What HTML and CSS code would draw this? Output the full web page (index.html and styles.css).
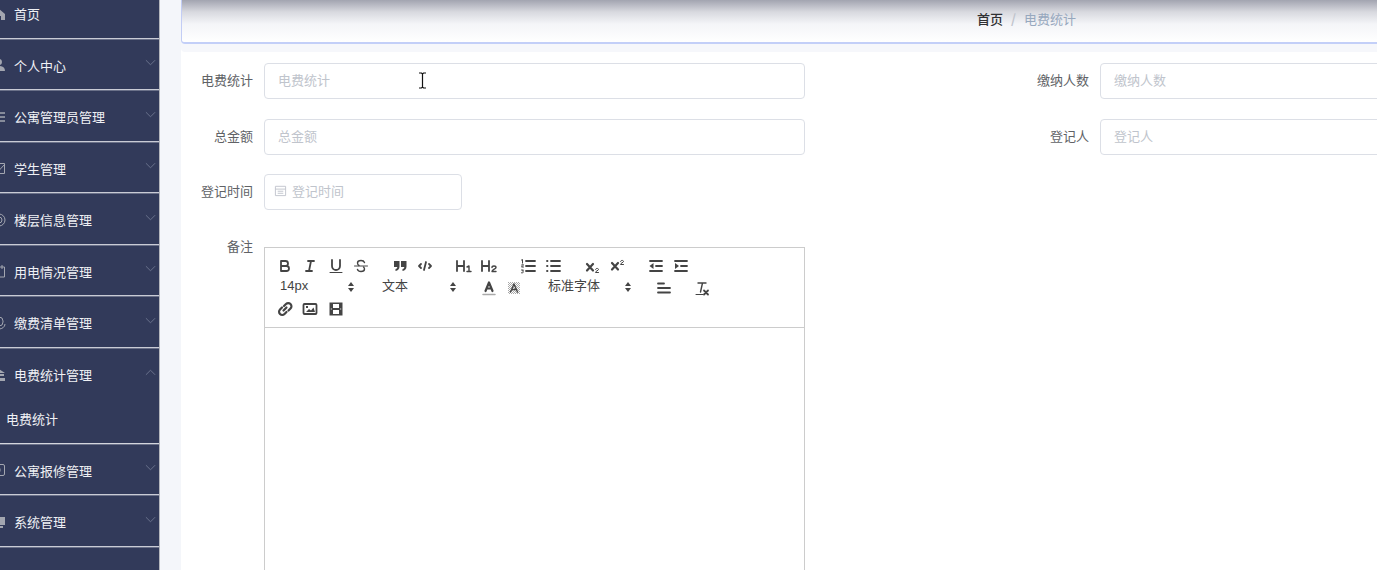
FILE: index.html
```html
<!DOCTYPE html>
<html lang="zh-CN">
<head>
  <meta charset="UTF-8" />
  <title>电费统计</title>
  <link rel="stylesheet" href="styles.css">
</head>
<body>
  <aside class="sidebar">
    <ul class="menu">
      <li class="menu-item">
        <svg class="menu-icon" viewBox="0 0 14 14"><path d="M7 2 1 7v6h4V9h4v4h4V7z" fill="currentColor"/></svg>
        <span>首页</span>
      </li>
      <li class="menu-item">
        <svg class="menu-icon" viewBox="0 0 14 14"><circle cx="7" cy="4" r="3" fill="currentColor"/><path d="M1 13c0-3 2-5 6-5s6 2 6 5z" fill="currentColor"/></svg>
        <span>个人中心</span>
        <svg class="chevron" viewBox="0 0 12 7"><path d="M1 1l5 5 5-5"/></svg>
      </li>
      <li class="menu-item">
        <svg class="menu-icon" viewBox="0 0 14 14"><path d="M1 3h12M1 7h12M1 11h12" stroke="currentColor" stroke-width="1.4" fill="none"/></svg>
        <span>公寓管理员管理</span>
        <svg class="chevron" viewBox="0 0 12 7"><path d="M1 1l5 5 5-5"/></svg>
      </li>
      <li class="menu-item">
        <svg class="menu-icon" viewBox="0 0 14 14"><path d="M1.500 2.500h11v10h-11zM4 8l2.500 2L13 3" stroke="currentColor" fill="none"/></svg>
        <span>学生管理</span>
        <svg class="chevron" viewBox="0 0 12 7"><path d="M1 1l5 5 5-5"/></svg>
      </li>
      <li class="menu-item">
        <svg class="menu-icon" viewBox="0 0 14 14"><circle cx="7" cy="7" r="6" stroke="currentColor" fill="none"/><circle cx="7" cy="7" r="3" stroke="currentColor" fill="none"/></svg>
        <span>楼层信息管理</span>
        <svg class="chevron" viewBox="0 0 12 7"><path d="M1 1l5 5 5-5"/></svg>
      </li>
      <li class="menu-item">
        <svg class="menu-icon" viewBox="0 0 14 14"><path d="M1.500 3h11v10h-11zM10 1v4" stroke="currentColor" fill="none"/></svg>
        <span>用电情况管理</span>
        <svg class="chevron" viewBox="0 0 12 7"><path d="M1 1l5 5 5-5"/></svg>
      </li>
      <li class="menu-item">
        <svg class="menu-icon" viewBox="0 0 14 14"><rect x="3" y="1" width="8" height="9" rx="4" stroke="currentColor" fill="none"/><path d="M1 8c0 3 3 5 6 5s6-2 6-5" stroke="currentColor" fill="none"/></svg>
        <span>缴费清单管理</span>
        <svg class="chevron" viewBox="0 0 12 7"><path d="M1 1l5 5 5-5"/></svg>
      </li>
      <li class="menu-item open">
        <svg class="menu-icon" viewBox="0 0 14 14"><path d="M7 1 1 5h12zM2 6h10v2H2zM1 10h12v3H1z" fill="currentColor"/></svg>
        <span>电费统计管理</span>
        <svg class="chevron" viewBox="0 0 12 7"><path d="M1 6l5-5 5 5"/></svg>
      </li>
      <li class="menu-sub">电费统计</li>
      <li class="menu-item">
        <svg class="menu-icon" viewBox="0 0 14 14"><rect x="1.500" y="1.500" width="11" height="11" rx="1.500" stroke="currentColor" fill="none"/><rect x="5.500" y="5.500" width="3" height="3" fill="currentColor"/></svg>
        <span>公寓报修管理</span>
        <svg class="chevron" viewBox="0 0 12 7"><path d="M1 1l5 5 5-5"/></svg>
      </li>
      <li class="menu-item">
        <svg class="menu-icon" viewBox="0 0 14 14"><path d="M1 2h12v8H1zM3 11h8v2H3z" fill="currentColor"/></svg>
        <span>系统管理</span>
        <svg class="chevron" viewBox="0 0 12 7"><path d="M1 1l5 5 5-5"/></svg>
      </li>
    </ul>
  </aside>

  <main class="main">
    <header class="topbar">
      <span class="crumb-home">首页</span>
      <span class="crumb-sep">/</span>
      <span class="crumb-now">电费统计</span>
    </header>

    <form class="form">
      <div class="form-row">
        <div class="field">
          <label class="field-label">电费统计</label>
          <input class="field-input" placeholder="电费统计" />
        </div>
        <div class="field">
          <label class="field-label">缴纳人数</label>
          <input class="field-input" placeholder="缴纳人数" />
        </div>
      </div>
      <div class="form-row">
        <div class="field">
          <label class="field-label">总金额</label>
          <input class="field-input" placeholder="总金额" />
        </div>
        <div class="field">
          <label class="field-label">登记人</label>
          <input class="field-input" placeholder="登记人" />
        </div>
      </div>
      <div class="form-row">
        <div class="field">
          <label class="field-label">登记时间</label>
          <div class="date-input">
            <svg class="date-icon" viewBox="0 0 14 14"><path d="M1.500 2.500h11v10h-11zM1.500 5.500h11M4 7.800h6M4 10h6" stroke="currentColor" fill="none"/></svg>
            <input placeholder="登记时间" />
          </div>
        </div>
      </div>
      <div class="form-row editor-row">
        <label class="field-label">备注</label>
        <div class="editor">
          <div class="toolbar">
            <div class="tb-row">
              <div class="tb-group">
                <span class="tb-btn"><svg viewBox="0 0 18 18"><path d="M5 4h4.500a2.500 2.500 0 0 1 0 5H5zM5 9h5.500a2.500 2.500 0 0 1 0 5H5z"/></svg></span>
                <span class="tb-btn"><svg viewBox="0 0 18 18"><path d="M7 4h6M5 14h6M8 14l2-10"/></svg></span>
                <span class="tb-btn"><svg viewBox="0 0 18 18"><path d="M5 3v6a4 4 0 0 0 8 0V3"/><path d="M3 15.500h12" class="thin"/></svg></span>
                <span class="tb-btn"><svg viewBox="0 0 18 18"><path class="thin" d="M2.500 9h13"/><path class="thin-b" d="M12.500 5.500C12 4 10.500 3.500 9 3.500c-2 0-3.500 1-3.500 2.500 0 1 .5 2 1.500 2.500M5.500 12.500c.5 1.500 2 2 3.500 2 2 0 3.500-1 3.500-2.500 0-1-.5-1.500-1-2"/></svg></span>
              </div>
              <div class="tb-group">
                <span class="tb-btn"><svg viewBox="0 0 18 18"><path class="solid" d="M3 4h5.500v5.500c0 2.500-1.500 4-4 4.500v-2c1 0 1.800-.8 1.800-2H3zM10 4h5.500v5.500c0 2.500-1.500 4-4 4.500v-2c1 0 1.800-.8 1.800-2H10z"/></svg></span>
                <span class="tb-btn"><svg viewBox="0 0 18 18"><path d="M5 7 3 9l2 2M13 7l2 2-2 2M10 5 8 13"/></svg></span>
              </div>
              <div class="tb-group">
                <span class="tb-btn"><svg viewBox="0 0 18 18"><path d="M2 4v10M9 4v10M2 9h7"/><path class="thin-b" d="M12 10l2-1v5.500M12 14.500h4"/></svg></span>
                <span class="tb-btn"><svg viewBox="0 0 18 18"><path d="M2 4v10M9 4v10M2 9h7"/><path class="thin-b" d="M12 10.500c0-2 4-2 4 0 0 1.500-4 2-4 4h4"/></svg></span>
              </div>
              <div class="tb-group">
                <span class="tb-btn"><svg viewBox="0 0 18 18"><path d="M7 4h9M7 9h9M7 14h9"/><path class="thin" d="M2.500 3l1-.5v3.500M2.500 8c0-1 2-1 2 0 0 .8-2 1-2 2h2M2.500 13h2l-1 1c1 0 1.200 1.800 0 1.800h-1"/></svg></span>
                <span class="tb-btn"><svg viewBox="0 0 18 18"><path d="M7 4h9M7 9h9M7 14h9M3 4h.5M3 9h.5M3 14h.5"/></svg></span>
              </div>
              <div class="tb-group">
                <span class="tb-btn"><svg viewBox="0 0 18 18"><path class="thick" d="M4 7l6 6.500M10 7l-6 6.500"/><path class="thin" d="M12.500 12.500c0-1.500 3-1.500 3 0 0 1-3 1.500-3 3h3"/></svg></span>
                <span class="tb-btn"><svg viewBox="0 0 18 18"><path class="thick" d="M4 6l6 6.500M10 6l-6 6.500"/><path class="thin" d="M12.500 4.500c0-1.500 3-1.500 3 0 0 1-3 1.500-3 3h3"/></svg></span>
              </div>
              <div class="tb-group">
                <span class="tb-btn"><svg viewBox="0 0 18 18"><path d="M3 4h12M9 9h6M3 14h12"/><path class="solid" d="M6.500 6v6L2.500 9z"/></svg></span>
                <span class="tb-btn"><svg viewBox="0 0 18 18"><path d="M3 4h12M9 9h6M3 14h12"/><path class="solid" d="M3 6v6L7 9z"/></svg></span>
              </div>
            </div>
            <div class="tb-row">
              <div class="tb-group">
                <span class="tb-picker">14px<svg class="updown" viewBox="0 0 8 12"><path d="M4 1 7 5H1zM4 11 1 7h6z"/></svg></span>
              </div>
              <div class="tb-group">
                <span class="tb-picker">文本<svg class="updown" viewBox="0 0 8 12"><path d="M4 1 7 5H1zM4 11 1 7h6z"/></svg></span>
              </div>
              <div class="tb-group">
                <span class="tb-btn"><svg viewBox="0 0 18 18"><path class="thick" d="M5.500 12 9 3.500l3.500 8.500M6.500 9.500h5"/><path class="gray" d="M3 15.500h12"/></svg></span>
                <span class="tb-btn"><svg viewBox="0 0 18 18"><defs><pattern id="hatch" width="2" height="2" patternUnits="userSpaceOnUse"><rect class="blank-stroke" width="1" height="1" fill="#aaa"/><rect class="blank-stroke" x="1" y="1" width="1" height="1" fill="#aaa"/></pattern></defs><rect class="hatch" x="3" y="3" width="12" height="12" fill="url(#hatch)"/><path class="thin-b" d="M5.500 13 9 5l3.500 8M7 10.500h4"/></svg></span>
              </div>
              <div class="tb-group">
                <span class="tb-picker wide">标准字体<svg class="updown" viewBox="0 0 8 12"><path d="M4 1 7 5H1zM4 11 1 7h6z"/></svg></span>
              </div>
              <div class="tb-group">
                <span class="tb-btn"><svg viewBox="0 0 18 18"><path d="M3 4.500h6M3 9h12M3 13.500h12"/></svg></span>
              </div>
              <div class="tb-group">
                <span class="tb-btn"><svg viewBox="0 0 18 18"><path class="thin-b" d="M5 4h8M9.500 4 7.500 13"/><path class="thin" d="M3 15.500h7"/><path d="M11 11.500l4 4M15 11.500l-4 4"/></svg></span>
              </div>
            </div>
            <div class="tb-row">
              <div class="tb-group">
                <span class="tb-btn"><svg viewBox="0 0 18 18"><path class="thick" d="M7.500 10.500l3-3M6 7.500 4 9.500a3 3 0 0 0 4.500 4.500L10.500 12M8 6 10 4a3 3 0 0 1 4.500 4.500L12.500 10.500"/></svg></span>
                <span class="tb-btn"><svg viewBox="0 0 18 18"><rect x="2.500" y="4" width="13" height="10" rx="1"/><path class="solid" d="M5 12l3-3 2 1.500 2.500-3L14 12z"/><path class="solid" d="M5 6h2v2H5z"/></svg></span>
                <span class="tb-btn"><svg viewBox="0 0 18 18"><path class="solid" d="M2.500 2.500h13v13h-13z"/><path class="blank" d="M6 4h6v4H6zM6 10h6v4H6zM3.800 8.500h1v1h-1zM13.200 8.500h1v1h-1z"/></svg></span>
              </div>
            </div>
          </div>
          <div class="editor-body"></div>
        </div>
      </div>
    </form>
  </main>

  <!-- mouse pointer -->
  <svg class="text-cursor" viewBox="0 0 9 17"><path d="M1 1h2.500L4.500 2l1-1H8M4.500 2v13M1 16h2.500l1-1 1 1H8" fill="none" stroke="#111" stroke-width="1.200"/></svg>
</body>
</html>
```

FILE: styles.css
```css
html, body {
  height: 100%;
}

body {
  margin: 0;
  display: flex;
  height: 570px;
  overflow: hidden;
  background-color: #f4f6fa;
  font-family: "Noto Sans CJK SC", "Liberation Sans", sans-serif;
  font-size: 13px;
  color: #606266;
}

/* sidebar */
.sidebar {
  width: 160px;
  flex: none;
  box-sizing: border-box;
  background-color: #323a5a;
  border-right: 1px solid #b4b6bd;
  overflow: hidden;
}

.menu {
  list-style: none;
  margin: -13px 0 0;
  padding: 0;
}

.menu-item {
  display: flex;
  align-items: center;
  height: 51.5px;
  box-sizing: border-box;
  padding-top: 3px;
  border-bottom: 1px solid #c9cbd5;
  box-shadow: 0 1px 0 #6b7189;
  color: #f0f1f5;
}

.menu-item.open {
  border-bottom: none;
  box-shadow: none;
}

.menu-icon {
  width: 14px;
  height: 14px;
  margin-left: -8px;
  margin-right: 8px;
  flex: none;
  color: #a3a6b0;
}

.chevron {
  width: 11px;
  height: 7px;
  margin-left: auto;
  margin-right: 3px;
  margin-top: -5px;
  fill: none;
  stroke: #6f7690;
  stroke-width: 1;
}

.menu-sub {
  height: 44.500px;
  box-sizing: border-box;
  padding: 10px 0 0 6px;
  line-height: 20px;
  border-bottom: 1px solid #d3d5dd;
  box-shadow: 0 1px 0 #6b7189;
  color: #f0f1f5;
}

/* main column */
.main {
  flex: none;
  width: 1196px;
  margin-left: 21px;
  background-color: #fff;
}

.topbar {
  display: flex;
  align-items: center;
  justify-content: flex-end;
  height: 44px;
  box-sizing: border-box;
  padding: 0 301px 5px 0;
  background: linear-gradient(#a2a4b0, #d8d9df 12px, #f4f5f8 24px, #fff);
  border-left: 1px solid #c3cdf5;
  border-bottom: 2px solid #c3cff8;
  border-bottom-left-radius: 4px;
  box-shadow: 0 8px 0 #f6f7fb;
}

.crumb-home {
  color: #303133;
  font-weight: 500;
}

.crumb-sep {
  margin: 0 8px;
  color: #c0c4cc;
  font-weight: 700;
}

.crumb-now {
  color: #97a8be;
}

/* form */
.form {
  padding-top: 19px;
}

.form-row {
  display: grid;
  grid-template-columns: 836px 836px;
  margin-bottom: 19.5px;
}

.field {
  display: flex;
  align-items: center;
}

.field-label {
  width: 72px;
  height: 36px;
  margin-right: 11px;
  flex: none;
  text-align: right;
  line-height: 34px;
}

.field-input {
  width: 541px;
  height: 36px;
  box-sizing: border-box;
  padding: 0 13px 3px;
  border: 1px solid #dcdfe6;
  border-radius: 4px;
  font: inherit;
  color: #606266;
  outline: none;
}

input::placeholder {
  color: #c0c4cc;
  opacity: 1;
}

.date-input {
  display: flex;
  align-items: center;
  width: 198px;
  height: 36px;
  box-sizing: border-box;
  padding: 0 0 3px 9px;
  border: 1px solid #dcdfe6;
  border-radius: 4px;
}

.date-icon {
  width: 13px;
  height: 13px;
  margin-right: 5px;
  flex: none;
  color: #c0c4cc;
}

.date-input input {
  flex: 1;
  min-width: 0;
  padding: 0;
  border: none;
  font: inherit;
  outline: none;
}

/* rich text editor */
.editor-row {
  display: flex;
  align-items: flex-start;
  margin-bottom: 0;
}

.editor-row .field-label {
  line-height: 32px;
}

.editor {
  width: 541px;
  margin-top: 17px;
  box-sizing: border-box;
  border: 1px solid #ccc;
}

.toolbar {
  height: 80px;
  box-sizing: border-box;
  padding: 8px 0 0 7px;
  border-bottom: 1px solid #ccc;
  font-family: "Liberation Sans", "Noto Sans CJK SC", sans-serif;
  color: #444;
}

.tb-row {
  display: flex;
  height: 21.5px;
}

.tb-group {
  display: flex;
  margin-right: 13px;
}

.tb-btn {
  display: flex;
  align-items: center;
  justify-content: center;
  width: 25.500px;
  height: 21.500px;
}

.tb-btn svg {
  width: 18px;
  height: 18px;
  fill: none;
  stroke: #444;
  stroke-width: 1.800;
  stroke-linecap: round;
  stroke-linejoin: round;
}

.tb-btn .thin {
  stroke-width: 1;
}

.tb-btn .thin-b {
  stroke-width: 1.400;
}

.tb-btn .thick {
  stroke-width: 2.200;
}

.tb-btn .solid {
  fill: #444;
  stroke: none;
}

.tb-btn .blank {
  fill: #fff;
  stroke: none;
}

.tb-btn .blank-stroke {
  stroke: none;
}

.tb-btn .gray {
  stroke: #aaa;
  stroke-width: 1.500;
}

.tb-btn .hatch {
  stroke: none;
}

.tb-picker {
  display: flex;
  align-items: center;
  justify-content: space-between;
  width: 87px;
  height: 18px;
  margin-right: 2px;
  box-sizing: border-box;
  padding: 0 4px 0 8px;
  line-height: 18px;
}

.tb-picker.wide {
  width: 96px;
}

.updown {
  width: 8px;
  height: 12px;
  margin-top: 2px;
  fill: #444;
}

.editor-body {
  height: 400px;
}

/* text cursor over the first input */
.text-cursor {
  position: absolute;
  left: 418px;
  top: 72px;
  width: 9px;
  height: 17px;
}
```
